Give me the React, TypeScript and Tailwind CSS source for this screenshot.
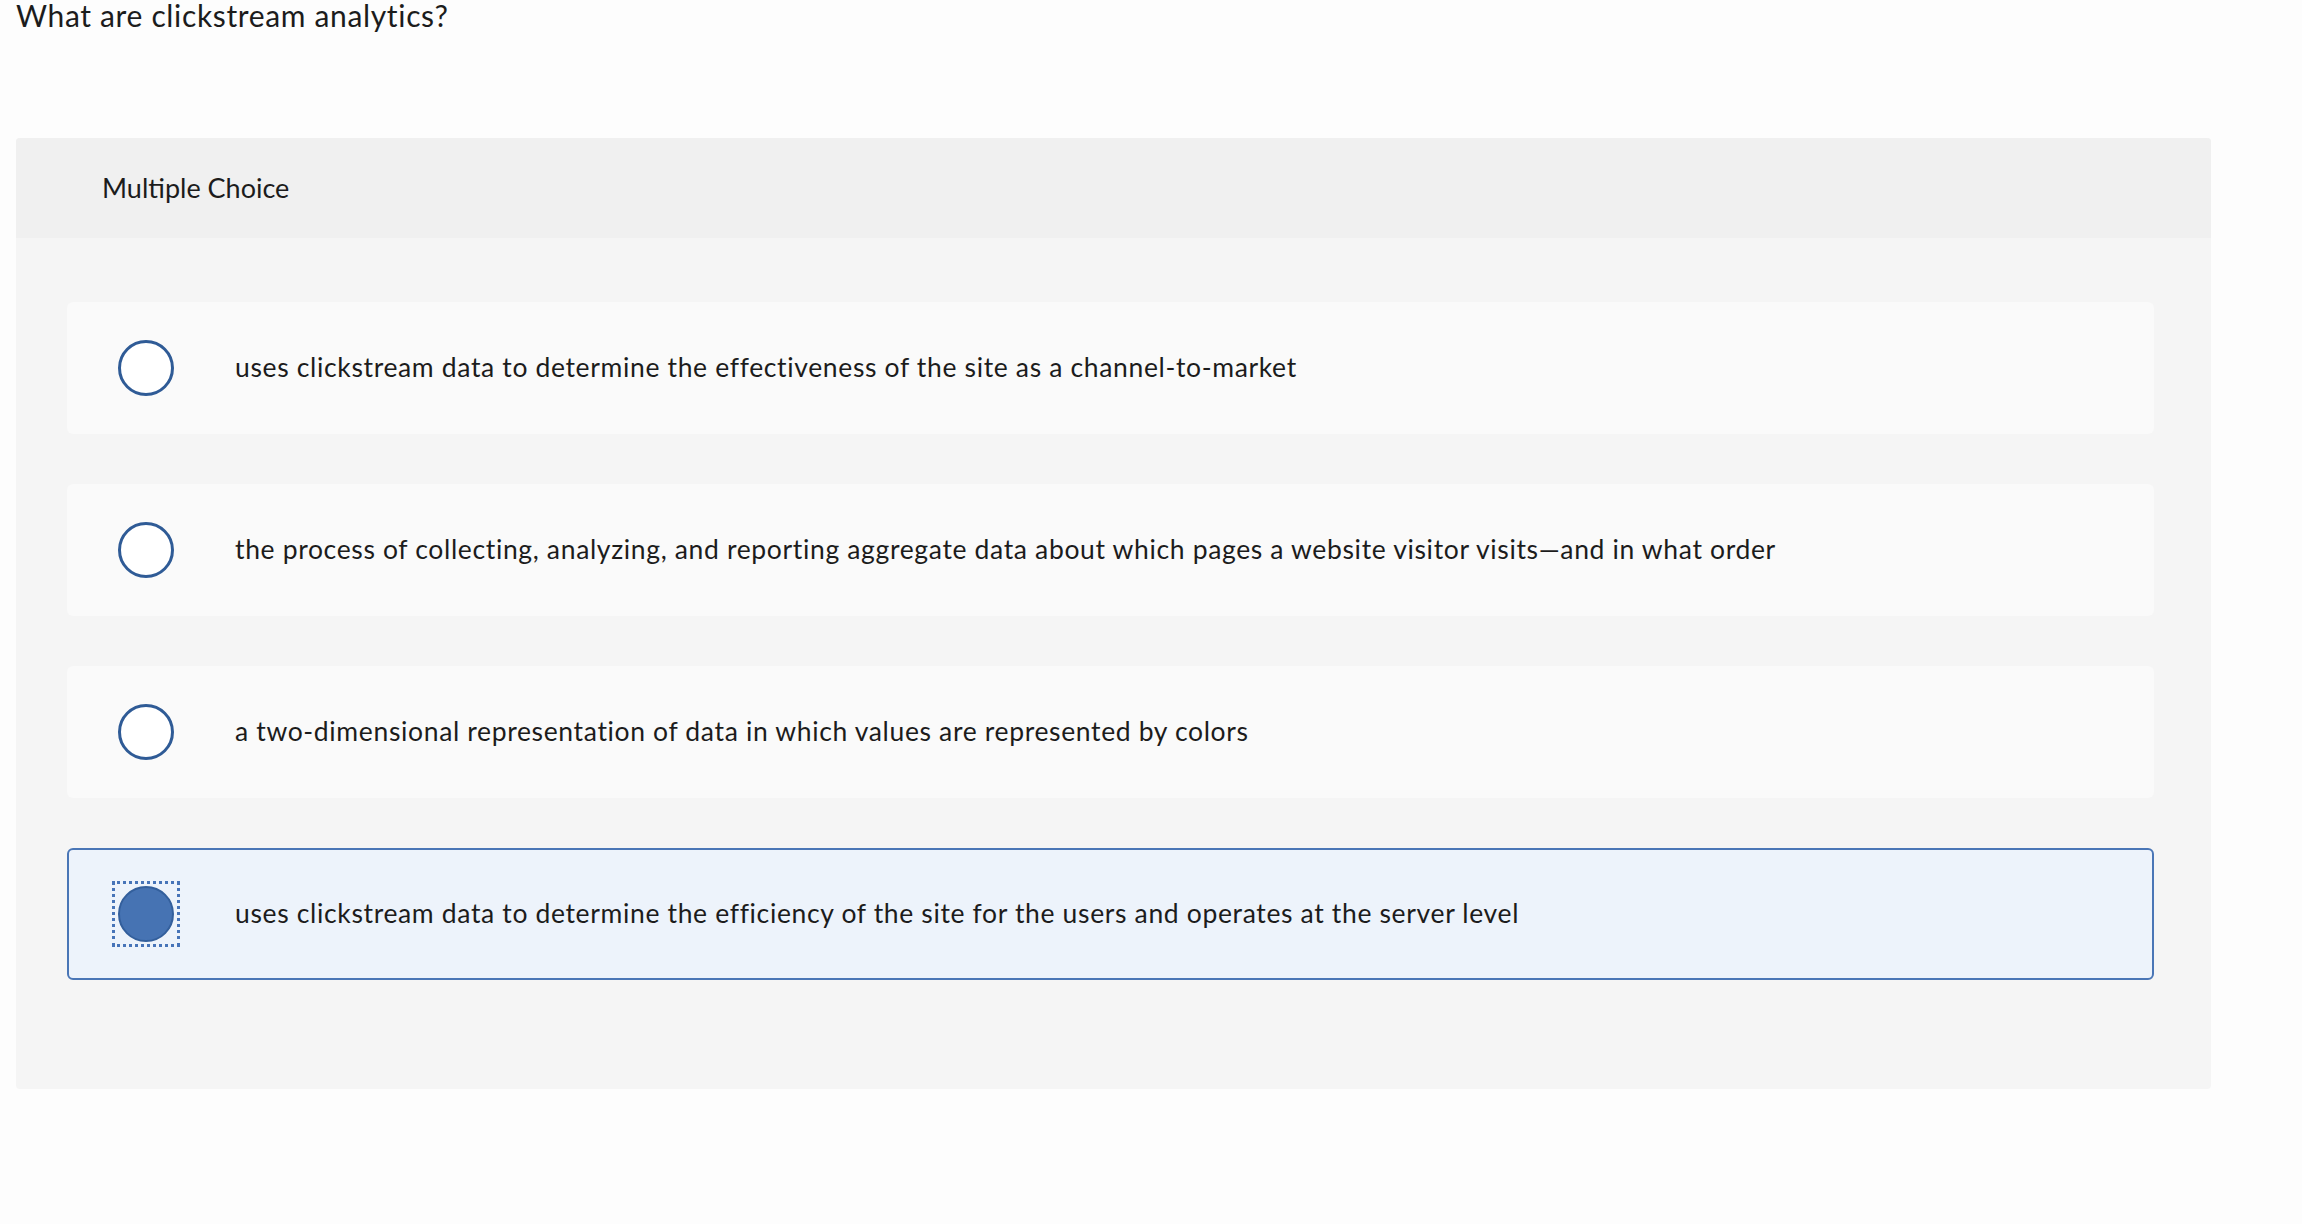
const options = [
  { id: 'a', text: 'uses clickstream data to determine the effectiveness of the site as a channel-to-market' },
  {
    id: 'b',
    text: 'the process of collecting, analyzing, and reporting aggregate data about which pages a website visitor visits\u2014and in what order',
  },
  { id: 'c', text: 'a two-dimensional representation of data in which values are represented by colors' },
  { id: 'd', text: 'uses clickstream data to determine the efficiency of the site for the users and operates at the server level' },
]

function Radio({ checked }: { checked: boolean }) {
  if (checked) {
    return (
      <span className="-ml-[3px] -mr-[3px] flex h-[60px] w-[62px] flex-shrink-0 items-center justify-center outline-[3px] outline-dotted outline-[#4774b8]">
        <span className="h-[56px] w-[56px] rounded-full border-2 border-[#335f9c] bg-[#4673b3]" />
      </span>
    )
  }
  return <span className="h-[56px] w-[56px] flex-shrink-0 rounded-full border-[3px] border-[#2f5b96] bg-white" />
}

export default function App() {
  const selected = 'd'

  return (
    <div className="min-h-screen bg-[#fdfdfd] font-['Lato',sans-serif] text-[#1c1c1c]">
      <h1 className="pl-[16px] text-[30px] leading-[30px] tracking-[0.65px]">What are clickstream analytics?</h1>

      <div className="ml-[16px] mt-[108px] w-[2195px] overflow-hidden rounded-[4px] bg-[#f5f5f5]">
        {/* Header */}
        <div className="flex h-[100px] items-center bg-[#f0f0f0] pl-[86px] text-[27px]">Multiple Choice</div>

        {/* Choices */}
        <div className="flex flex-col gap-[50px] pb-[109px] pl-[51px] pr-[57px] pt-[64px]">
          {options.map((o) => {
            const isSel = o.id === selected
            return (
              <div
                key={o.id}
                className={`flex h-[132px] items-center rounded-[6px] border-2 pl-[49px] ${
                  isSel ? 'border-[#4a76b6] bg-[#edf3fb]' : 'border-transparent bg-[#fafafa]'
                }`}
              >
                <Radio checked={isSel} />
                <span className="ml-[61px] text-[26.5px] tracking-[0.65px]">{o.text}</span>
              </div>
            )
          })}
        </div>
      </div>
    </div>
  )
}
